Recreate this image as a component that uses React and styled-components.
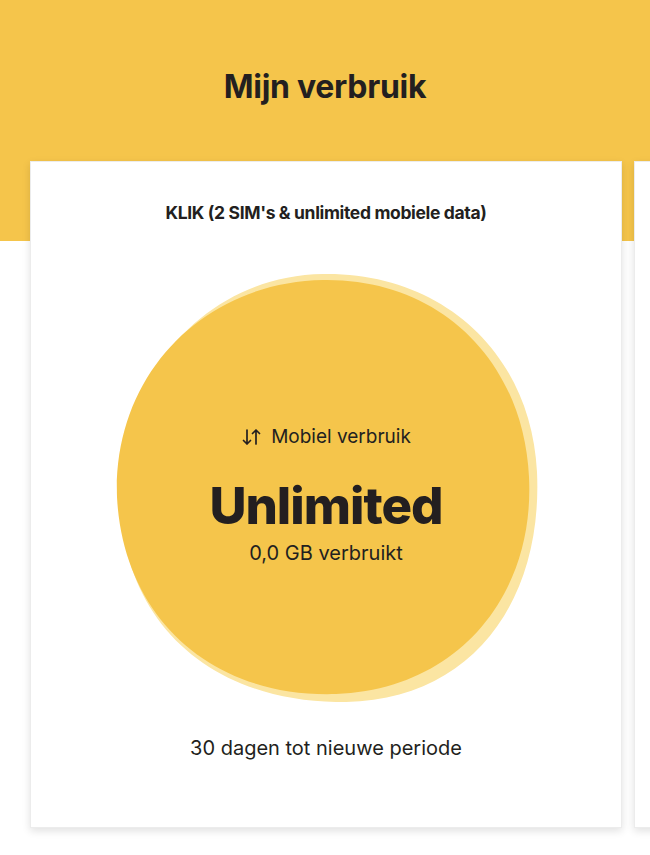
import React from "react";
import styled, { createGlobalStyle } from "styled-components";

const GlobalStyle = createGlobalStyle`
  body {
    margin: 0;
    background: #ffffff;
    font-family: Inter, "Liberation Sans", sans-serif;
    color: #231f20;
    overflow: hidden;
  }
`;

const Page = styled.div`
  position: relative;
  width: 650px;
  height: 855px;
  overflow: hidden;
`;

const Header = styled.header`
  background: #f5c54b;
  height: 241px;
  display: flex;
  justify-content: center;
  padding-top: 67px;
  box-sizing: border-box;
`;

const Title = styled.h1`
  margin: 0;
  font-size: 32px;
  font-weight: 700;
  letter-spacing: -0.3px;
  line-height: 40px;
`;

const Slider = styled.div`
  display: flex;
  gap: 12px;
  margin-top: -80px;
  padding-left: 30px;
`;

const Card = styled.section`
  flex: 0 0 592px;
  height: 667px;
  background: #ffffff;
  box-sizing: border-box;
  border: 1px solid #ececec;
  box-shadow: 0 3px 8px rgba(0, 0, 0, 0.12);
  display: flex;
  flex-direction: column;
  align-items: center;
`;

const PlanName = styled.h2`
  margin: 42px 0 0;
  font-size: 17.5px;
  font-weight: 700;
  letter-spacing: -0.35px;
  line-height: 18px;
`;

const Bubble = styled.div`
  position: relative;
  width: 430px;
  height: 430px;
  margin-top: 50px;
  display: flex;
  flex-direction: column;
  align-items: center;
  justify-content: center;
`;

const BlobArt = styled.svg`
  position: absolute;
  inset: 0;
  z-index: 0;
`;

const BubbleText = styled.div`
  position: relative;
  z-index: 1;
  display: flex;
  flex-direction: column;
  align-items: center;
  margin-top: 16px;
`;

const Label = styled.div`
  display: flex;
  align-items: center;
  gap: 8px;
  font-size: 19px;
  line-height: 22px;
`;

const Big = styled.div`
  font-size: 51px;
  font-weight: 800;
  letter-spacing: -1px;
  line-height: 56px;
  margin-top: 30px;
`;

const Used = styled.div`
  font-size: 20px;
  line-height: 22px;
  margin-top: 8px;
`;

const Footer = styled.p`
  margin: 34px 0 0;
  font-size: 20px;
  line-height: 24px;
`;

const ArrowsIcon = () => (
  <svg width="22" height="18" viewBox="0 0 22 18" fill="none" stroke="#231f20" strokeWidth="1.7" strokeLinecap="round" strokeLinejoin="round">
    <path d="M6 2v14M2.5 12.5L6 16l3.5-3.5" />
    <path d="M15 16V2M11.5 5.5L15 2l3.5 3.5" />
  </svg>
);

const Blob = () => (
  <BlobArt viewBox="0 0 430 430" width="430" height="430">
    <path
      d="M212 2 C330 0 420 80 426 200 C432 330 360 428 235 430 C110 432 18 360 10 240 C2 110 90 4 212 2 Z"
      fill="#fbe5a2"
    />
    <path
      d="M212 8 C325 6 412 85 418 205 C424 325 345 418 225 422 C100 426 12 345 6 225 C2 100 95 10 212 8 Z"
      fill="#f5c54b"
    />
  </BlobArt>
);

export default function App() {
  return (
    <Page>
      <GlobalStyle />
      <Header>
        <Title>Mijn verbruik</Title>
      </Header>
      <Slider>
        <Card>
          <PlanName>KLIK (2 SIM's &amp; unlimited mobiele data)</PlanName>
          <Bubble>
            <Blob />
            <BubbleText>
              <Label>
                <ArrowsIcon />
                Mobiel verbruik
              </Label>
              <Big>Unlimited</Big>
              <Used>0,0 GB verbruikt</Used>
            </BubbleText>
          </Bubble>
          <Footer>30 dagen tot nieuwe periode</Footer>
        </Card>
        <Card />
      </Slider>
    </Page>
  );
}
